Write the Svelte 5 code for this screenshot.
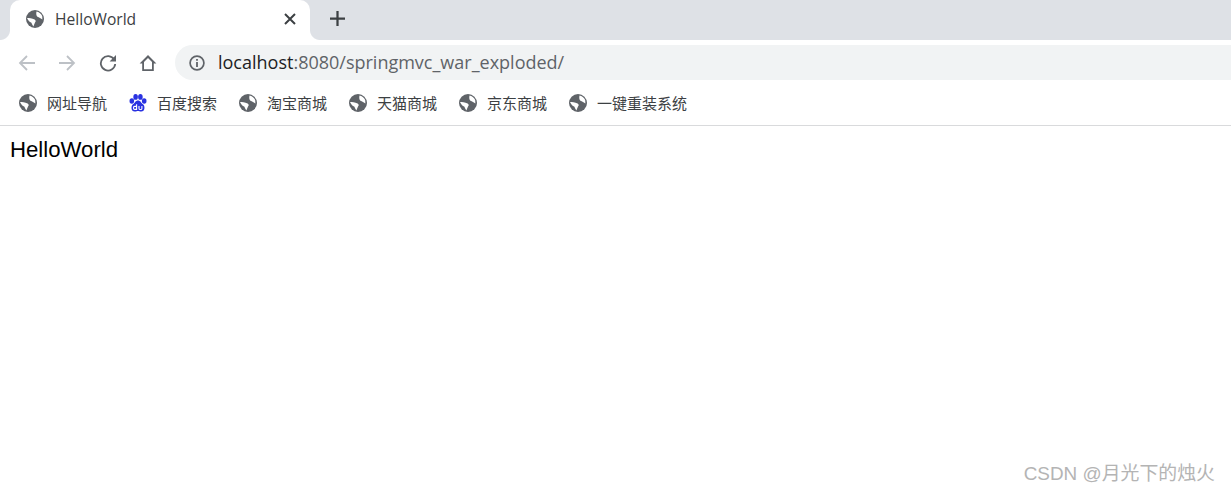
<script>
  const bookmarks = [
    { label: "网址导航", icon: "globe" },
    { label: "百度搜索", icon: "baidu" },
    { label: "淘宝商城", icon: "globe" },
    { label: "天猫商城", icon: "globe" },
    { label: "京东商城", icon: "globe" },
    { label: "一键重装系统", icon: "globe" },
  ];
</script>

{#snippet globe(cls)}
  <svg class={cls} viewBox="0 0 18 18">
    <circle cx="9" cy="9" r="9" fill="#5f6368" />
    <path d="M1 8 C3 8 6 8.4 8.6 9.6 C10 10.4 10 11.6 9 12.6 C8.6 13.6 8 15 7.4 16.6 C6.2 15 5.8 13.6 5.2 12.6 C3.6 11.8 2 10.4 1 8 Z" fill="#fff" />
    <path d="M10.5 1.5 C12.8 2 15 3.6 16.2 6 L16.4 9.5 C15 8.8 13 7 11.4 6.8 C10.2 5.6 10 3.4 10.5 1.5 Z" fill="#fff" />
  </svg>
{/snippet}

<div class="browser">
  <div class="tabstrip">
    <div class="tab">
      {@render globe("tab-icon")}
      <span class="tab-title">HelloWorld</span>
      <svg class="tab-close" viewBox="0 0 12 12">
        <path d="M1 1 L11 11 M11 1 L1 11" stroke="#3c4043" stroke-width="2" fill="none" />
      </svg>
    </div>
    <svg class="new-tab" viewBox="0 0 16 16">
      <path d="M8 0 V16 M0 8 H16" stroke="#3c4043" stroke-width="2.4" fill="none" />
    </svg>
  </div>

  <div class="toolbar">
    <div class="nav">
      <svg viewBox="0 0 18 18">
        <path d="M17 9 H2 M9 2 L2 9 L9 16" stroke="#bdc1c6" stroke-width="1.8" fill="none" />
      </svg>
      <svg viewBox="0 0 18 18">
        <path d="M1 9 H16 M9 2 L16 9 L9 16" stroke="#bdc1c6" stroke-width="1.8" fill="none" />
      </svg>
      <svg viewBox="0 0 18 18">
        <path d="M15.2 5.6 A7.2 7.2 0 1 0 16.2 10" stroke="#5f6368" stroke-width="1.8" fill="none" />
        <path d="M17 1 V7.4 H10.6 Z" fill="#5f6368" />
      </svg>
      <svg viewBox="0 0 18 18">
        <path d="M9 1 L0.6 9.4 H3.2 V17 H14.8 V9.4 H17.4 Z M5 8 L9 4 L13 8 V15.2 H5 Z" fill="#5f6368" fill-rule="evenodd" />
      </svg>
    </div>
    <div class="omnibox">
      <svg class="info" viewBox="0 0 16 16">
        <circle cx="8" cy="8" r="6.9" stroke="#5f6368" stroke-width="1.7" fill="none" />
        <path d="M7.1 7 H8.9 V12 H7.1 Z M7.1 4 H8.9 V5.8 H7.1 Z" fill="#5f6368" />
      </svg>
      <span class="url"><span class="host">localhost</span>:8080/springmvc_war_exploded/</span>
    </div>
  </div>

  <div class="bookmarks">
    {#each bookmarks as b}
      <div class="bookmark">
        {#if b.icon === "baidu"}
          <svg class="bm-icon" viewBox="0 0 18 18">
            <ellipse cx="2.8" cy="7" rx="2.3" ry="2.8" fill="#2932e1" />
            <ellipse cx="6.6" cy="2.9" rx="2.3" ry="2.9" fill="#2932e1" />
            <ellipse cx="11.4" cy="2.9" rx="2.3" ry="2.9" fill="#2932e1" />
            <ellipse cx="15.2" cy="7" rx="2.3" ry="2.8" fill="#2932e1" />
            <path d="M9 6.4 C11.6 6.4 11.8 8.8 14 10.2 C16.2 11.8 16.2 17.4 12.2 17.6 C10.8 17.6 10 17 9 17 C8 17 7.2 17.6 5.8 17.6 C1.8 17.4 1.8 11.8 4 10.2 C6.2 8.8 6.4 6.4 9 6.4 Z" fill="#2932e1" />
            <path d="M7.6 10.2 V15.4 H5.8 C4 15.4 4 12.4 5.8 12.4 H7.6 M10 12 V14.4 C10 15.9 12.9 15.9 12.9 14.4 V12" stroke="#fff" stroke-width="1.1" fill="none" />
          </svg>
        {:else}
          {@render globe("bm-icon")}
        {/if}
        <span class="bm-label">{b.label}</span>
      </div>
    {/each}
  </div>

  <main class="page">HelloWorld</main>
</div>

<div class="watermark">CSDN @月光下的烛火</div>

<style>
  :global(body) {
    background: #fff;
    overflow: hidden;
  }

  .browser {
    display: flex;
    flex-direction: column;
    font-family: "Open Sans", "Noto Sans CJK SC", sans-serif;
  }

  .tabstrip {
    height: 40px;
    background: #dee1e6;
    display: flex;
    align-items: center;
    padding-left: 10px;
    position: relative;
  }

  /* flares either side of the active tab */
  .tabstrip::before {
    content: "";
    position: absolute;
    left: 0;
    bottom: 0;
    width: 10px;
    height: 10px;
    background: radial-gradient(circle at 0 0, transparent 9.5px, #fff 10.5px);
  }

  .tab {
    width: 300px;
    height: 40px;
    box-sizing: border-box;
    background: #fff;
    border-radius: 10px 10px 0 0;
    display: flex;
    align-items: center;
    padding: 0 14px 3px 16px;
    position: relative;
  }

  .tab::after {
    content: "";
    position: absolute;
    left: 100%;
    bottom: 0;
    width: 10px;
    height: 10px;
    background: radial-gradient(circle at 100% 0, transparent 9.5px, #fff 10.5px);
  }

  .tab-icon {
    width: 18px;
    height: 18px;
    flex: none;
  }

  .tab-title {
    margin-left: 11px;
    flex: 1;
    font-size: 15.6px;
    color: #3c4043;
  }

  .tab-close {
    width: 12px;
    height: 12px;
  }

  .new-tab {
    width: 15px;
    height: 15px;
    margin: 0 0 4px 20px;
  }

  .toolbar {
    height: 45px;
    display: flex;
    align-items: center;
    background: #fff;
  }

  .nav {
    display: flex;
    gap: 22.4px;
    padding-left: 18px;
    width: 175px;
    box-sizing: border-box;
    flex: none;
  }

  .nav svg {
    width: 18px;
    height: 18px;
  }

  .omnibox {
    flex: 1;
    height: 35px;
    background: #f1f3f4;
    border-radius: 18px 0 0 18px;
    display: flex;
    align-items: center;
    padding-left: 14px;
  }

  .info {
    width: 16px;
    height: 16px;
    flex: none;
  }

  .url {
    margin-left: 13px;
    font-size: 18px;
    color: #5f6368;
    white-space: nowrap;
    padding-bottom: 1px;
  }

  .host {
    color: #202124;
  }

  .bookmarks {
    height: 40px;
    box-sizing: content-box;
    display: flex;
    align-items: center;
    padding-left: 19px;
    gap: 22px;
    border-bottom: 1px solid #d9dadc;
    font-size: 15px;
    color: #3c4043;
  }

  .bookmark {
    display: flex;
    align-items: center;
    gap: 10px;
    margin-bottom: 4px;
  }

  .bm-label {
    margin-bottom: 1px;
  }

  .bm-icon {
    width: 18px;
    height: 18px;
    flex: none;
  }

  .page {
    padding: 11px 10px;
    font-family: "Liberation Sans", sans-serif;
    font-size: 22.2px;
    color: #000;
  }

  .watermark {
    position: absolute;
    right: 16px;
    top: 458px;
    font-family: "Liberation Sans", "Noto Sans CJK SC", sans-serif;
    font-size: 18.9px;
    color: #b4b4b4;
  }
</style>
